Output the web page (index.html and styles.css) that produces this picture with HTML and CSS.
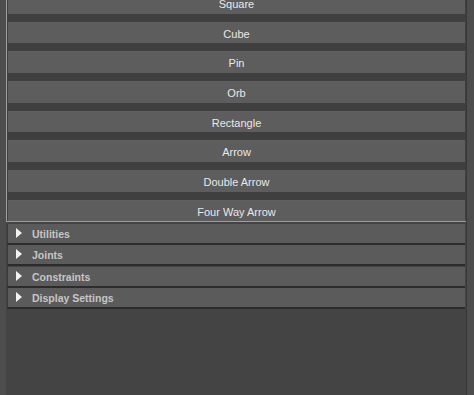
FILE: index.html
```html
<!DOCTYPE html>
<html lang="en">
<head>
	<meta charset="UTF-8">
	<title>Controls</title>
	<link rel="stylesheet" href="styles.css">
</head>
<body>
	<div class="panel">
		<div class="frame">
			<div class="btn">Square</div>
			<div class="btn">Cube</div>
			<div class="btn">Pin</div>
			<div class="btn">Orb</div>
			<div class="btn">Rectangle</div>
			<div class="btn">Arrow</div>
			<div class="btn">Double Arrow</div>
			<div class="btn">Four Way Arrow</div>
		</div>
		<div class="section">
			<svg class="arrow" width="6" height="10" viewBox="0 0 6 10"><polygon points="0,0 6,5 0,10" fill="#f2f2f2"/></svg>
			<span>Utilities</span>
		</div>
		<div class="section">
			<svg class="arrow" width="6" height="10" viewBox="0 0 6 10"><polygon points="0,0 6,5 0,10" fill="#f2f2f2"/></svg>
			<span>Joints</span>
		</div>
		<div class="section">
			<svg class="arrow" width="6" height="10" viewBox="0 0 6 10"><polygon points="0,0 6,5 0,10" fill="#f2f2f2"/></svg>
			<span>Constraints</span>
		</div>
		<div class="section">
			<svg class="arrow" width="6" height="10" viewBox="0 0 6 10"><polygon points="0,0 6,5 0,10" fill="#f2f2f2"/></svg>
			<span>Display Settings</span>
		</div>
	</div>
</body>
</html>
```
FILE: styles.css
```css
*{
	box-sizing: border-box;
}
body{
	margin: 0;
	height: 395px;
	overflow: hidden;
	background: #4d4d4d;
	font-family: "Liberation Sans", Arial, sans-serif;
	font-size: 11px;
}
.panel{
	display: flow-root;
	margin: 0 7px 0 6px;
	height: 395px;
	background: #444444;
	border-right: 1px solid #383838;
}
.frame{
	margin-top: -8px;
	padding: 0 1px;
	background: #3f3f3f;
	border-left: 1px solid #9e9e9e;
	border-bottom: 1px solid #9e9e9e;
}
.btn{
	height: 21.67px;
	margin-bottom: 8px;
	padding-top: 1px;
	background: #5d5d5d;
	color: #e8e8e8;
	text-align: center;
	line-height: 20px;
	border-top: 1px solid #606060;
}
.btn:last-child{
	margin-bottom: 0;
}
.section{
	display: flex;
	align-items: center;
	height: 21px;
	margin: 1.8px 1px 0.3px 1px;
	padding-left: 8px;
	padding-top: 1px;
	background: #5b5b5b;
	border-left: 1px solid #3a3a3a;
	border-bottom: 2px solid #2c2c2c;
	color: #c6c6c6;
	font-size: 10.5px;
	font-weight: bold;
}
.section + .section{
	margin-top: 0;
}
.arrow{
	margin-right: 10px;
	margin-top: -2px;
	flex-shrink: 0;
}
```
